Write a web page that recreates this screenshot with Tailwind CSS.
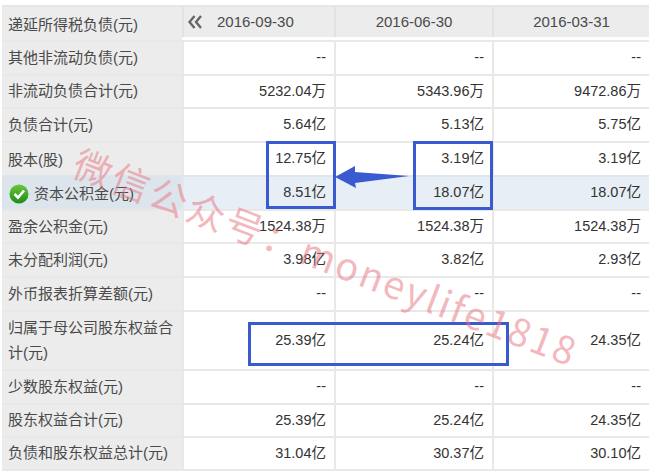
<!DOCTYPE html>
<html lang="zh">
<head>
    <meta charset="UTF-8">
    <title>资产负债表</title>
    <script src="https://cdn.jsdelivr.net/npm/@tailwindcss/browser@4"></script>
</head>
<body class="bg-white">
    <div class="relative w-[649px] h-[475px] overflow-hidden pt-[5px] pl-[2px] text-[15px] text-[#4a4a4a] font-['Liberation_Sans','Noto_Sans_CJK_SC',sans-serif]">
        <!-- Header -->
        <div class="flex h-[35px] items-stretch border-t-2 border-[#e6e6e6]">
            <div class="w-[180px] pl-[6px] pt-[3px] flex items-center bg-[#ececec]">递延所得税负债(元)</div>
            <div class="flex w-[152px] h-[30px] items-center bg-[#ececec] border-l-2 border-[#e2e2e2]">
                <svg class="ml-[4px] mr-[15px]" width="14" height="14" viewBox="0 0 14 14">
                    <path d="M6.5 1 L1.5 7 L6.5 13 M13 1 L8 7 L13 13" fill="none" stroke="#666" stroke-width="2.4"/>
                </svg>
                <span>2016-09-30</span>
            </div>
            <div class="w-[158px] h-[30px] flex items-center justify-center bg-[#ececec] border-l-2 border-[#e2e2e2]">2016-06-30</div>
            <div class="w-[157px] h-[30px] flex items-center justify-center bg-[#ececec] border-l-2 border-[#e2e2e2]">2016-03-31</div>
        </div>

        <!-- Rows -->
        <div class="flex h-[34px] items-stretch border-t-2 border-[#e8e8e8] text-[14.5px]">
            <div class="w-[180px] pl-[6px] flex items-center bg-[#ececec] text-[15px]">其他非流动负债(元)</div>
            <div class="w-[152px] flex items-center justify-end pr-[8px] text-[#333] border-l-2 border-[#e8e8e8]">--</div>
            <div class="w-[158px] flex items-center justify-end pr-[8px] text-[#333] border-l-2 border-[#e8e8e8]">--</div>
            <div class="w-[157px] flex items-center justify-end pr-[8px] text-[#333] border-l-2 border-[#e8e8e8]">--</div>
        </div>
        <div class="flex h-[33px] items-stretch border-t-2 border-[#e8e8e8] text-[14.5px]">
            <div class="w-[180px] pl-[6px] flex items-center bg-[#ececec] text-[15px]">非流动负债合计(元)</div>
            <div class="w-[152px] flex items-center justify-end pr-[8px] text-[#333] border-l-2 border-[#e8e8e8]">5232.04万</div>
            <div class="w-[158px] flex items-center justify-end pr-[8px] text-[#333] border-l-2 border-[#e8e8e8]">5343.96万</div>
            <div class="w-[157px] flex items-center justify-end pr-[8px] text-[#333] border-l-2 border-[#e8e8e8]">9472.86万</div>
        </div>
        <div class="flex h-[34px] items-stretch border-t-2 border-[#e8e8e8] text-[14.5px]">
            <div class="w-[180px] pl-[6px] flex items-center bg-[#ececec] text-[15px]">负债合计(元)</div>
            <div class="w-[152px] flex items-center justify-end pr-[8px] text-[#333] border-l-2 border-[#e8e8e8]">5.64亿</div>
            <div class="w-[158px] flex items-center justify-end pr-[8px] text-[#333] border-l-2 border-[#e8e8e8]">5.13亿</div>
            <div class="w-[157px] flex items-center justify-end pr-[8px] text-[#333] border-l-2 border-[#e8e8e8]">5.75亿</div>
        </div>
        <div class="flex h-[34px] items-stretch border-t-2 border-[#e8e8e8] text-[14.5px]">
            <div class="w-[180px] pl-[6px] pt-[2px] flex items-center bg-[#ececec] text-[15px]">股本(股)</div>
            <div class="w-[152px] flex items-center justify-end pr-[8px] text-[#333] border-l-2 border-[#e8e8e8]">12.75亿</div>
            <div class="w-[158px] flex items-center justify-end pr-[8px] text-[#333] border-l-2 border-[#e8e8e8]">3.19亿</div>
            <div class="w-[157px] flex items-center justify-end pr-[8px] text-[#333] border-l-2 border-[#e8e8e8]">3.19亿</div>
        </div>
        <div class="flex h-[34px] items-stretch border-t-2 border-[#dfe5ea] bg-[#e7eef5] text-[14.5px]">
            <div class="w-[180px] pl-[7px] pt-[2px] flex items-center gap-[5px] bg-[#dde5ec] text-[15px]">
                <svg width="20" height="20" viewBox="0 0 20 20">
                    <defs>
                        <linearGradient id="okFill" x1="0" y1="0" x2="0" y2="1">
                            <stop offset="0" stop-color="#6cc83c"/>
                            <stop offset="1" stop-color="#1c8a1c"/>
                        </linearGradient>
                    </defs>
                    <circle cx="10" cy="10" r="9.5" fill="url(#okFill)"/>
                    <path d="M5.5 10 L9 13.5 L15 6.5" fill="none" stroke="#fff" stroke-width="2.6"/>
                </svg>
                <span>资本公积金(元)</span>
            </div>
            <div class="w-[152px] flex items-center justify-end pr-[8px] text-[#333] border-l-2 border-[#e8e8e8]">8.51亿</div>
            <div class="w-[158px] flex items-center justify-end pr-[8px] text-[#333] border-l-2 border-[#e8e8e8]">18.07亿</div>
            <div class="w-[157px] flex items-center justify-end pr-[8px] text-[#333] border-l-2 border-[#e8e8e8]">18.07亿</div>
        </div>
        <div class="flex h-[33px] items-stretch border-t-2 border-[#e8e8e8] text-[14.5px]">
            <div class="w-[180px] pl-[6px] pt-[2px] flex items-center bg-[#ececec] text-[15px]">盈余公积金(元)</div>
            <div class="w-[152px] flex items-center justify-end pr-[8px] text-[#333] border-l-2 border-[#e8e8e8]">1524.38万</div>
            <div class="w-[158px] flex items-center justify-end pr-[8px] text-[#333] border-l-2 border-[#e8e8e8]">1524.38万</div>
            <div class="w-[157px] flex items-center justify-end pr-[8px] text-[#333] border-l-2 border-[#e8e8e8]">1524.38万</div>
        </div>
        <div class="flex h-[34px] items-stretch border-t-2 border-[#e8e8e8] text-[14.5px]">
            <div class="w-[180px] pl-[6px] flex items-center bg-[#ececec] text-[15px]">未分配利润(元)</div>
            <div class="w-[152px] flex items-center justify-end pr-[8px] text-[#333] border-l-2 border-[#e8e8e8]">3.98亿</div>
            <div class="w-[158px] flex items-center justify-end pr-[8px] text-[#333] border-l-2 border-[#e8e8e8]">3.82亿</div>
            <div class="w-[157px] flex items-center justify-end pr-[8px] text-[#333] border-l-2 border-[#e8e8e8]">2.93亿</div>
        </div>
        <div class="flex h-[34px] items-stretch border-t-2 border-[#e8e8e8] text-[14.5px]">
            <div class="w-[180px] pl-[6px] flex items-center bg-[#ececec] text-[15px]">外币报表折算差额(元)</div>
            <div class="w-[152px] flex items-center justify-end pr-[8px] text-[#333] border-l-2 border-[#e8e8e8]">--</div>
            <div class="w-[158px] flex items-center justify-end pr-[8px] text-[#333] border-l-2 border-[#e8e8e8]">--</div>
            <div class="w-[157px] flex items-center justify-end pr-[8px] text-[#333] border-l-2 border-[#e8e8e8]">--</div>
        </div>
        <div class="flex h-[59px] items-stretch border-t-2 border-[#e8e8e8] text-[14.5px]">
            <div class="w-[180px] pl-[6px] pr-[4px] pb-[2px] flex items-center bg-[#ececec] text-[15px] leading-[25px]">归属于母公司股东权益合计(元)</div>
            <div class="w-[152px] flex items-center justify-end pr-[8px] text-[#333] border-l-2 border-[#e8e8e8]">25.39亿</div>
            <div class="w-[158px] flex items-center justify-end pr-[8px] text-[#333] border-l-2 border-[#e8e8e8]">25.24亿</div>
            <div class="w-[157px] flex items-center justify-end pr-[8px] text-[#333] border-l-2 border-[#e8e8e8]">24.35亿</div>
        </div>
        <div class="flex h-[34px] items-stretch border-t-2 border-[#e8e8e8] text-[14.5px]">
            <div class="w-[180px] pl-[6px] flex items-center bg-[#ececec] text-[15px]">少数股东权益(元)</div>
            <div class="w-[152px] flex items-center justify-end pr-[8px] text-[#333] border-l-2 border-[#e8e8e8]">--</div>
            <div class="w-[158px] flex items-center justify-end pr-[8px] text-[#333] border-l-2 border-[#e8e8e8]">--</div>
            <div class="w-[157px] flex items-center justify-end pr-[8px] text-[#333] border-l-2 border-[#e8e8e8]">--</div>
        </div>
        <div class="flex h-[33px] items-stretch border-t-2 border-[#e8e8e8] text-[14.5px]">
            <div class="w-[180px] pl-[6px] flex items-center bg-[#ececec] text-[15px]">股东权益合计(元)</div>
            <div class="w-[152px] flex items-center justify-end pr-[8px] text-[#333] border-l-2 border-[#e8e8e8]">25.39亿</div>
            <div class="w-[158px] flex items-center justify-end pr-[8px] text-[#333] border-l-2 border-[#e8e8e8]">25.24亿</div>
            <div class="w-[157px] flex items-center justify-end pr-[8px] text-[#333] border-l-2 border-[#e8e8e8]">24.35亿</div>
        </div>
        <div class="flex h-[35px] items-stretch border-y-2 border-[#e8e8e8] text-[14.5px]">
            <div class="w-[180px] pl-[6px] flex items-center bg-[#ececec] text-[15px]">负债和股东权益总计(元)</div>
            <div class="w-[152px] flex items-center justify-end pr-[8px] text-[#333] border-l-2 border-[#e8e8e8]">31.04亿</div>
            <div class="w-[158px] flex items-center justify-end pr-[8px] text-[#333] border-l-2 border-[#e8e8e8]">30.37亿</div>
            <div class="w-[157px] flex items-center justify-end pr-[8px] text-[#333] border-l-2 border-[#e8e8e8]">30.10亿</div>
        </div>

        <!-- Annotations drawn on top of the table -->
        <div class="absolute left-[266px] top-[141px] w-[70px] h-[68px] border-[3px] border-[#3a5bd0]"></div>
        <div class="absolute left-[413px] top-[141px] w-[80px] h-[69px] border-[3px] border-[#3a5bd0]"></div>
        <div class="absolute left-[248px] top-[322px] w-[261px] h-[44px] border-[3px] border-[#3a5bd0]"></div>
        <svg class="absolute left-[330px] top-[160px]" width="85" height="34" viewBox="0 0 85 34">
            <polygon points="5,17 25,6 25,12 79,16 25,23 26,28" fill="#3a5bd0"/>
        </svg>

        <!-- Watermark -->
        <div class="absolute left-[76px] top-[141px] origin-left rotate-[21deg] whitespace-nowrap text-[38px] tracking-[2.5px] leading-none text-[#e8727e]/50 font-['Noto_Sans_CJK_SC',sans-serif] font-normal">微信公众号：moneylife1818</div>
    </div>
</body>
</html>
